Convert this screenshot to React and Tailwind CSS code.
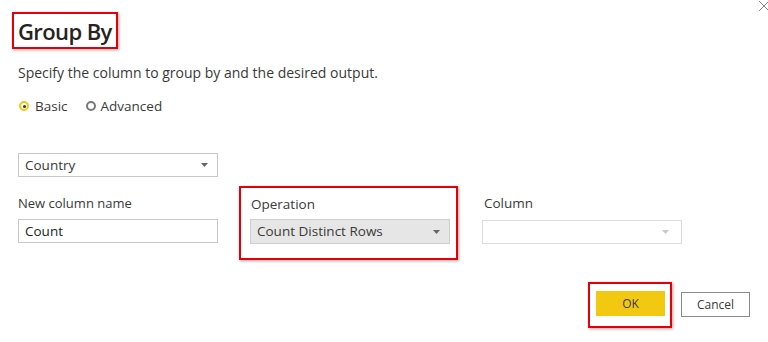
import React from "react";

const Arrow = ({ color = "#666" }) => (
  <svg width="7" height="4" viewBox="0 0 7 4" className="shrink-0">
    <path d="M0 0 L7 0 L3.5 4 Z" fill={color} />
  </svg>
);

export default function App() {
  return (
    <div
      className="relative w-[768px] h-[342px] bg-white flex flex-col pl-[18px] text-[#333333] overflow-hidden"
      style={{ fontFamily: '"Open Sans", "Noto Sans", sans-serif' }}
    >
      <svg
        className="absolute left-[758px] top-0"
        width="12"
        height="13"
        viewBox="0 0 12 13"
      >
        <path d="M1 1 L11 11 M11 1 L1 11" stroke="#8a8a8a" strokeWidth="1" />
      </svg>

      <div className="ml-[-6px] mt-[12px] w-[106px] h-[37px] border-2 border-[#e3000b] flex items-center pl-[4px] shadow-[1px_1px_3px_rgba(0,0,0,0.35)]">
        <span className="text-[22px] font-semibold leading-none text-[#252423] tracking-[-0.6px] whitespace-nowrap">
          Group By
        </span>
      </div>

      <div className="mt-[14px] h-5 leading-5 text-[14px] text-[#3b3a39] whitespace-nowrap">
        Specify the column to group by and the desired output.
      </div>

      <div className="mt-[13px] h-5 flex items-center text-[13.5px] text-[#3b3a39]">
        <span className="ml-[1px] w-[10px] h-[10px] rounded-full border-2 border-[#f2c811] flex items-center justify-center">
          <span className="w-[3px] h-[3px] rounded-full bg-[#333]" />
        </span>
        <span className="ml-[6px]">Basic</span>
        <span className="ml-[18px] w-[10px] h-[10px] rounded-full border-2 border-[#777]" />
        <span className="ml-[5px]">Advanced</span>
      </div>

      <div className="mt-[37px] w-[200px] h-[24px] border border-[#c8c8c8] flex items-center justify-between pl-[6px] pr-[9px] text-[13.5px] text-[#3b3a39]">
        <span>Country</span>
        <Arrow />
      </div>

      <div className="mt-[9px] flex items-start text-[13.5px] text-[#3b3a39]">
        <div className="flex flex-col pt-[7px]">
          <div className="h-5 leading-5 text-[13px]">New column name</div>
          <div className="mt-[6px] w-[200px] h-[24px] border border-[#c8c8c8] flex items-center pl-[6px] text-[#252423]">
            Count
          </div>
        </div>

        <div className="ml-[21px] w-[219px] h-[74px] border-2 border-[#e3000b] flex flex-col pl-[9px] pt-[6px] shadow-[1px_1px_3px_rgba(0,0,0,0.35)]">
          <div className="h-5 leading-5 ml-[1px]">Operation</div>
          <div className="mt-[5px] w-[200px] h-[25px] border border-[#cfcfcf] bg-[#e6e6e6] flex items-center justify-between pl-[6px] pr-[9px]">
            <span>Count Distinct Rows</span>
            <Arrow />
          </div>
        </div>

        <div className="ml-[24px] flex flex-col pt-[7px]">
          <div className="h-5 leading-5 ml-[2px]">Column</div>
          <div className="mt-[7px] w-[200px] h-[24px] border border-[#dcdcdc] flex items-center justify-end pr-[12px]">
            <Arrow color="#c8c8c8" />
          </div>
        </div>
      </div>

      <div className="mt-[22px] flex items-start justify-end pr-[18px] text-[12px] text-[#3b3a39]">
        <div className="w-[84px] h-[46px] border-2 border-[#e3000b] pl-[6px] pt-[7px] shadow-[1px_1px_3px_rgba(0,0,0,0.35)]">
          <div className="w-[69px] h-[25px] bg-[#f2c811] flex items-center justify-center">
            OK
          </div>
        </div>
        <div className="ml-[9px] mt-[10px] w-[69px] h-[25px] border border-[#8a8a8a] flex items-center justify-center">
          Cancel
        </div>
      </div>
    </div>
  );
}
